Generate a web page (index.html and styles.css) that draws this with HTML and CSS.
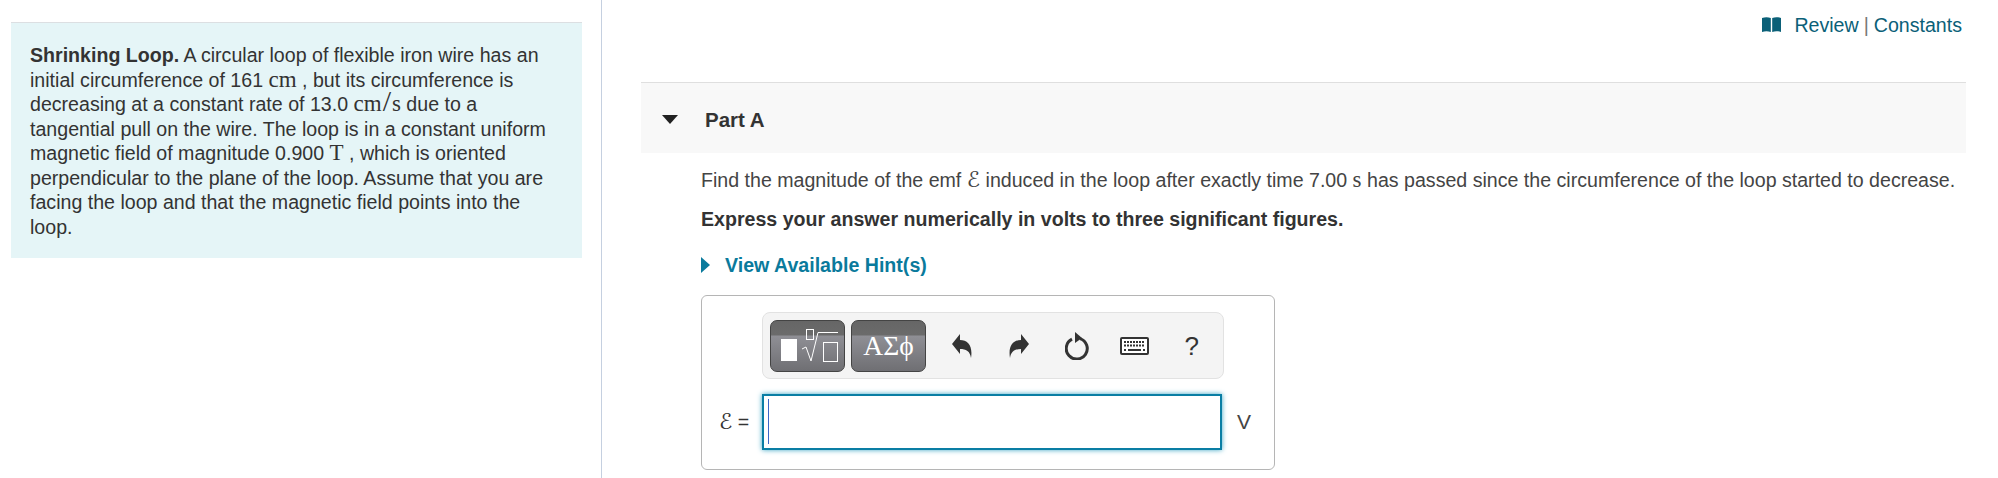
FILE: index.html

```html
<!DOCTYPE html>
<html>
  <head>
    <meta charset="utf-8" />
    <title>Shrinking Loop</title>
    <link rel="stylesheet" href="styles.css">
  </head>
  <body>
    <div class="page">
      <!-- LEFT COLUMN -->
      <div class="sidebar">
        <div class="intro">
          <b>Shrinking Loop.</b> A circular loop of flexible iron wire has an
          initial circumference of 161 <span class="math">cm</span> , but its circumference is
          decreasing at a constant rate of 13.0 <span class="math">cm<span class="slash">/</span>s</span> due to a
          tangential pull on the wire. The loop is in a constant uniform
          magnetic field of magnitude 0.900 <span class="math">T</span> , which is oriented
          perpendicular to the plane of the loop. Assume that you are
          facing the loop and that the magnetic field points into the
          loop.
        </div>
      </div>

      <!-- RIGHT COLUMN -->
      <div class="main">
        <div class="topLinks">
          <svg class="bookIcon" width="19" height="16" viewBox="0 0 19 16">
            <path d="M0 1 C3 0 6 0 8.800 1 V15 C6 14 3 14 0 15 Z M10.200 1 C13 0 16 0 19 1 V15 C16 14 13 14 10.200 15 Z" fill="#0b6078"/>
          </svg>
          <a class="topLink">Review</a>
          <span class="pipe">|</span>
          <a class="topLink">Constants</a>
        </div>

        <div class="partHeader">
          <span class="partArrow"></span>
          <span class="partTitle">Part A</span>
        </div>

        <div class="partBody">
          <p class="question">Find the magnitude of the emf <span class="scriptE">ℰ</span> induced in the loop after exactly time 7.00 <span class="math">s</span> has passed since the circumference of the loop started to decrease.</p>
          <p class="instruction">Express your answer numerically in volts to three significant figures.</p>
          <div class="hintRow">
            <span class="hintArrow"></span>
            <span class="hintLabel">View Available Hint(s)</span>
          </div>

          <div class="answerBox">
            <div class="toolbar">
              <div class="toolButton">
                <svg width="73" height="50" viewBox="0 0 73 50">
                  <rect x="10" y="18" width="16" height="22" fill="#fff"/>
                  <g fill="none" stroke="#fff" stroke-width="1">
                    <rect x="35.500" y="8.500" width="7" height="10"/>
                    <rect x="52.500" y="21.500" width="14" height="19"/>
                    <path d="M31 28 L35 26 L40 40 L47 11.500 H67"/>
                  </g>
                </svg>
              </div>
              <div class="toolButton greekButton">ΑΣϕ</div>
              <div class="toolIcons">
                <svg width="20" height="24" viewBox="0 0 20 24">
                  <path d="M0 10 L8 0 V6 C16 6 21 12 19 24 C18 17 14 15 8 15 V20 Z" fill="#333"/>
                </svg>
                <svg width="20" height="24" viewBox="0 0 20 24">
                  <path d="M20 10 L12 0 V6 C4 6 -1 12 1 24 C2 17 6 15 12 15 V20 Z" fill="#333"/>
                </svg>
                <svg width="24" height="28" viewBox="0 0 24 28">
                  <path d="M15 6.600 A10.500 10.500 0 1 1 7 7.200" fill="none" stroke="#333" stroke-width="3"/>
                  <path d="M10 0 L17 6 L10 11 Z" fill="#333"/>
                </svg>
                <svg width="29" height="18" viewBox="0 0 29 18">
                  <rect x="1" y="1" width="27" height="16" rx="1" fill="#fff" stroke="#333" stroke-width="2"/>
                  <path d="M4 5 H25 M4 8.500 H25" stroke="#333" stroke-width="2" stroke-dasharray="2 1"/>
                  <path d="M4 13 H6 M8 13 H21 M23 13 H25" stroke="#333" stroke-width="2"/>
                </svg>
                <span class="helpIcon">?</span>
              </div>
            </div>

            <div class="answerRow">
              <span class="answerLabel"><span class="scriptE">ℰ</span> =</span>
              <div class="answerInput"><span class="caret"></span></div>
              <span class="answerUnit">V</span>
            </div>
          </div>
        </div>
      </div>
    </div>
  </body>
</html>
```

FILE: styles.css

```css
html, body {
  margin: 0;
  height: 478px;
  overflow: hidden;
  background-color: #fff;
}
body {
  font-family: "Liberation Sans", Arial, sans-serif;
  font-size: 19.600px;
  color: #333;
}
.page {
  display: flex;
  height: 478px;
}

/* left column */
.sidebar {
  width: 602px;
  box-sizing: border-box;
  border-right: 1px solid #c5d0e0;
  padding: 22px 19px 0 11px;
}
.intro {
  background-color: #e5f5f7;
  border-top: 1px solid #dcdfe2;
  padding: 20px 32px 0 19px;
  line-height: 24.500px;
  height: 236px;
  box-sizing: border-box;
}
.math {
  font-family: "Liberation Serif", "Times New Roman", serif;
  font-size: 23px;
  line-height: 20px;
}
.slash {
  font-size: 30px;
  line-height: 10px;
  margin: 0 1px;
}

/* right column */
.main {
  flex: 1;
  padding: 0 32px 0 39px;
  min-width: 0;
}
.topLinks {
  height: 82px;
  display: flex;
  justify-content: flex-end;
  align-items: flex-start;
  gap: 5px;
  padding: 14px 4px 0 0;
  box-sizing: border-box;
  color: #0b6078;
}
.bookIcon {
  margin: 3px 8px 0 0;
}
.pipe {
  color: #777;
}
.partHeader {
  height: 71px;
  box-sizing: border-box;
  border-top: 1px solid #dfdfdf;
  background-color: #f8f8f8;
  display: flex;
  align-items: center;
  font-weight: bold;
  font-size: 20.500px;
  padding: 3px 0 0 21px;
}
.partArrow {
  width: 0;
  height: 0;
  border-left: 8px solid transparent;
  border-right: 8px solid transparent;
  border-top: 9px solid #222;
  margin-right: 27px;
}
.partBody {
  padding-left: 60px;
}
.question {
  margin: 16px 0 0 0;
  line-height: 22px;
  color: #444;
  white-space: nowrap;
}
.scriptE {
  font-family: "DejaVu Sans", sans-serif;
  font-style: italic;
  font-size: 22px;
  line-height: 20px;
}
.instruction {
  margin: 17px 0 0 0;
  line-height: 22px;
  font-weight: bold;
}
.hintRow {
  display: flex;
  align-items: center;
  margin-top: 24px;
  height: 22px;
  color: #0a7a9c;
  font-weight: bold;
}
.hintArrow {
  width: 0;
  height: 0;
  border-top: 8px solid transparent;
  border-bottom: 8px solid transparent;
  border-left: 9px solid #0a7a9c;
  margin-right: 15px;
}

/* answer box */
.answerBox {
  margin-top: 19px;
  width: 574px;
  height: 175px;
  box-sizing: border-box;
  border: 1px solid #b5b5b5;
  border-radius: 6px;
  padding-top: 16px;
}
.toolbar {
  margin-left: 60px;
  width: 462px;
  height: 67px;
  box-sizing: border-box;
  border: 1px solid #e2e2e2;
  border-radius: 8px;
  background-color: #f4f4f4;
  display: flex;
  align-items: center;
  padding-left: 7px;
  gap: 6px;
}
.toolButton {
  width: 75px;
  height: 52px;
  box-sizing: border-box;
  border: 1px solid #444;
  border-radius: 7px;
  background: linear-gradient(#666 0, #6b6b6b 14px, #8f8f95 15px, #6f6f73 100%);
  overflow: hidden;
}
.toolButton svg {
  display: block;
}
.greekButton {
  color: #fff;
  font-family: "Liberation Serif", serif;
  font-size: 27.500px;
  text-align: center;
  line-height: 50px;
}
.toolIcons {
  margin-left: 1px;
  display: grid;
  grid-template-columns: repeat(5, 57.500px);
  align-items: center;
  justify-items: center;
}
.helpIcon {
  font-size: 26px;
  line-height: 28px;
}
.answerRow {
  display: flex;
  align-items: center;
  margin-top: 15px;
}
.answerLabel {
  width: 60px;
  box-sizing: border-box;
  padding-left: 17px;
}
.answerInput {
  width: 460px;
  height: 56px;
  box-sizing: border-box;
  border: 2px solid #0a7ea4;
  box-shadow: 0 0 5px #3aa5c4;
  background-color: #fff;
  padding: 3px 0 0 4px;
}
.caret {
  display: block;
  width: 1px;
  height: 45px;
  background-color: #3b66c8;
}
.answerUnit {
  margin-left: 15px;
  font-size: 21px;
  color: #444;
}
```
